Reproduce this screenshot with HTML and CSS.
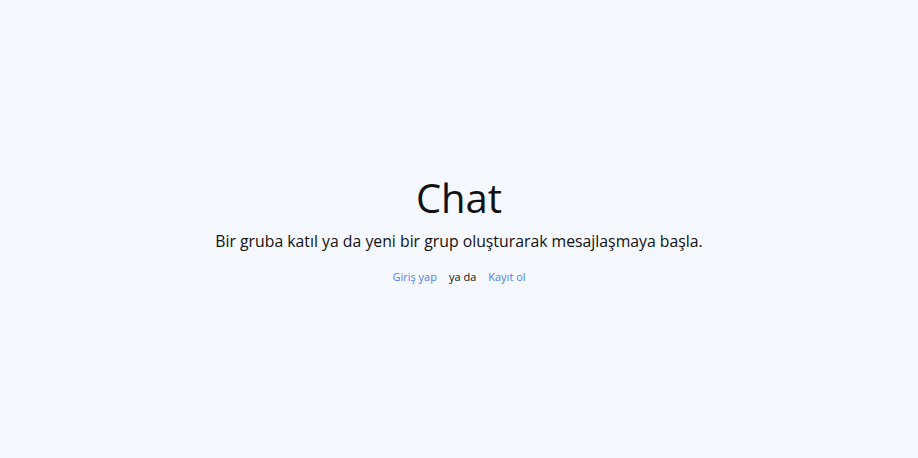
FILE: index.html
```html
<!DOCTYPE html>
<html>
    <head>
        <title>Chat</title>
        <link rel="stylesheet" href="styles.css">
    </head>
    <body>
        <div class="welcome">
            <h1 class="title">Chat</h1>
            <p class="subtitle">Bir gruba katıl ya da yeni bir grup oluşturarak mesajlaşmaya başla.</p>
            <div class="actions">
                <a href="#" class="link">Giriş yap</a>
                <span class="or">ya da</span>
                <a href="#" class="link">Kayıt ol</a>
            </div>
        </div>
    </body>
</html>
```

FILE: styles.css
```css
html, body{
    height: 100%;
}

body{
    margin: 0;
    background-color: #f5f8ff;
    font-family: "Open Sans", "Noto Sans", sans-serif;
    color: #111;
}

.welcome{
    height: 100%;
    display: flex;
    flex-direction: column;
    align-items: center;
    justify-content: center;
}

.title{
    margin: 0;
    font-size: 40px;
    font-weight: 400;
    line-height: 1.2;
}

.subtitle{
    margin: 8px 0 0 0;
    font-size: 15.8px;
}

.actions{
    margin-top: 17px;
    display: flex;
    gap: 12px;
    font-size: 11px;
}

.link{
    color: #4f7ff0;
    text-decoration: none;
}
```
